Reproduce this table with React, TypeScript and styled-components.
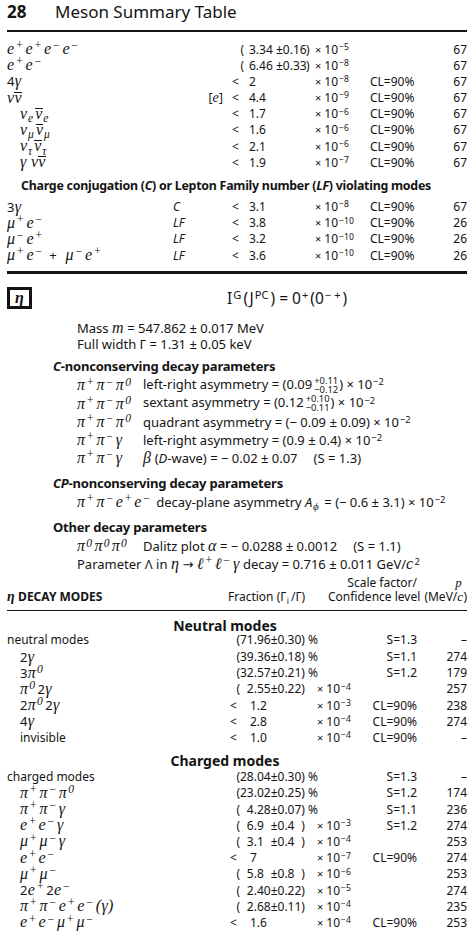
import React from "react";
import styled, { createGlobalStyle } from "styled-components";

const SANS = `"Noto Sans", "Open Sans", "DejaVu Sans", sans-serif`;
const SERIF = `"Liberation Serif", "Times New Roman", serif`;
const INK = "#141414";

const GlobalStyle = createGlobalStyle`
  html, body { margin: 0; padding: 0; background: #ffffff; }
  body { font-family: ${SANS}; color: ${INK}; }
  * { box-sizing: border-box; }
`;

const Page = styled.main`
  width: 474px;
  padding: 0 7px;
  font-size: 12px;
  line-height: 16px;
`;

const Header = styled.header`
  display: flex;
  align-items: center;
  height: 30px;
  padding-bottom: 6px;
  font-size: 17px;
`;

const PageNumber = styled.span`
  width: 48px;
  font-weight: 700;
`;

const Title = styled.h1`
  margin: 0;
  font-size: 17px;
  font-weight: 400;
`;

const Rule = styled.hr<{ $weight: number; $gap?: number }>`
  border: 0;
  margin: ${(p) => p.$gap ?? 0}px 0 0;
  height: ${(p) => p.$weight}px;
  background: ${INK};
`;

/* ---------- math helpers ---------- */
const M = styled.span<{ $size?: number }>`
  font-family: ${SERIF};
  font-style: italic;
  font-size: ${(p) => p.$size ?? 16}px;
  letter-spacing: 0.3px;
`;

const Sup = styled.sup`
  font-size: 0.72em;
  line-height: 0;
  vertical-align: 0.42em;
  margin: 0 2px 0 1px;
`;

const Sub = styled.sub`
  font-size: 0.72em;
  line-height: 0;
  vertical-align: -0.3em;
  margin: 0 2px 0 0.5px;
`;

const Bar = styled.span`
  display: inline-block;
  border-top: 1px solid currentColor;
  line-height: 0.5em;
  padding-top: 1px;
`;

const Stack = styled.span`
  display: inline-flex;
  flex-direction: column;
  vertical-align: middle;
  font-size: 0.72em;
  line-height: 0.95;
  margin: 0 1px 0 2px;
`;

const Up = styled.span`
  font-family: ${SANS};
  font-style: normal;
  font-size: 13px;
`;

/* ---------- top table ---------- */
const TopTable = styled.section`
  margin-top: 9px;
`;

const TopRow = styled.div`
  display: grid;
  grid-template-columns: 166px 32px 25px 19px 27px 30px 8px 52px 1fr 46px;
  align-items: center;
  height: 16.2px;
  white-space: nowrap;
`;

const Label = styled.div<{ $indent?: boolean }>`
  padding-left: ${(p) => (p.$indent ? 13 : 0)}px;
`;

const Flag = styled.div`
  font-style: italic;
`;

const Note = styled.div`
  text-align: right;
  padding-right: 7px;
`;

const Lead = styled.div<{ $paren?: boolean; $padR: number }>`
  text-align: ${(p) => (p.$paren ? "right" : "left")};
  padding: 0 ${(p) => (p.$paren ? p.$padR : 0)}px 0 ${(p) => (p.$paren ? 0 : 2)}px;
`;

const Num = styled.div``;
const Err = styled.div``;
const Close = styled.div``;

const Exp = styled.div`
  padding-left: 1px;
`;

const Times = styled.span`
  font-size: 11px;
  margin-right: 3px;
`;

const Conf = styled.div`
  padding-left: 4px;
`;

const Mom = styled.div`
  text-align: right;
`;

const TopHeading = styled.h2`
  margin: 0;
  height: 28px;
  padding: 2px 22px 0 0;
  line-height: 26px;
  font-size: 12.4px;
  font-weight: 700;
  letter-spacing: -0.25px;
  text-align: center;
  white-space: nowrap;
`;

/* ---------- eta header ---------- */
const EtaRow = styled.div`
  display: flex;
  align-items: center;
  margin-top: 12.5px;
`;

const EtaBox = styled.div`
  width: 25px;
  height: 22px;
  border: 3px solid ${INK};
  display: flex;
  align-items: center;
  justify-content: center;
  font-family: ${SERIF};
  font-style: italic;
  font-weight: 700;
  font-size: 16px;
`;

const Quantum = styled.div`
  margin-left: 195px;
  font-size: 15.5px;
`;

/* ---------- parameters ---------- */
const Params = styled.section`
  padding-left: 46px;
  font-size: 13px;
  white-space: nowrap;
`;

const Basic = styled.div<{ $first?: boolean }>`
  padding-left: 24px;
  height: 17px;
  line-height: 17px;
  margin-top: ${(p) => (p.$first ? 10 : 0)}px;
`;

const ParamHeading = styled.h3<{ $gap: number }>`
  margin: ${(p) => p.$gap}px 0 0;
  height: 20px;
  line-height: 20px;
  font-size: 13px;
  font-weight: 700;
  letter-spacing: -0.2px;
`;

const ParamRow = styled.div<{ $h?: number }>`
  display: grid;
  grid-template-columns: 66px 1fr;
  align-items: center;
  height: ${(p) => p.$h ?? 18.2}px;
  padding-left: 24px;
`;

const ParamLine = styled.div<{ $h?: number }>`
  display: flex;
  align-items: center;
  height: ${(p) => p.$h ?? 18.2}px;
  padding-left: 24px;
`;

const Gap = styled.span<{ $w: number }>`
  display: inline-block;
  width: ${(p) => p.$w}px;
`;

/* ---------- decay modes ---------- */
const DecayHead = styled.div`
  display: grid;
  grid-template-columns: 221px 100px 89px 50px;
  align-items: end;
  margin-top: 4px;
  line-height: 14px;
  white-space: nowrap;
`;

const HeadTitle = styled.div`
  font-weight: 700;
`;

const HeadRight = styled.div`
  text-align: right;
`;

const MomHead = styled.span`
  display: inline-block;
  padding-right: 5px;
`;

const DecayHeading = styled.h2<{ $h: number; $gap: number }>`
  margin: ${(p) => p.$gap}px 0 0;
  height: ${(p) => p.$h}px;
  line-height: ${(p) => p.$h}px;
  padding-right: 24px;
  font-size: 14px;
  font-weight: 700;
  text-align: center;
`;

const DecayRow = styled.div`
  display: grid;
  grid-template-columns: 221px 12px 75px 52px 50px 50px;
  align-items: center;
  height: 16.2px;
  white-space: nowrap;
`;

const Body = styled.div<{ $lt?: boolean }>`
  padding-left: ${(p) => (p.$lt ? 10 : 0)}px;
`;

const DExp = styled.div`
  padding-left: 2px;
`;

const Scale = styled.div`
  text-align: right;
`;

/* ---------- data ---------- */
type TopData = {
  label: React.ReactNode;
  indent?: boolean;
  flag?: string;
  note?: boolean;
  lt?: boolean;
  val: string;
  err?: string;
  exp: string;
  cl?: boolean;
  p: string;
};

const nuBar = <Bar>ν</Bar>;

const topRows: TopData[] = [
  {
    label: (
      <M>
        e<Sup>+</Sup>e<Sup>+</Sup>e<Sup>−</Sup>e<Sup>−</Sup>
      </M>
    ),
    val: "3.34",
    err: "±0.16",
    exp: "−5",
    p: "67",
  },
  {
    label: (
      <M>
        e<Sup>+</Sup>e<Sup>−</Sup>
      </M>
    ),
    val: "6.46",
    err: "±0.33",
    exp: "−8",
    p: "67",
  },
  {
    label: (
      <M>
        <Up>4</Up>γ
      </M>
    ),
    lt: true,
    val: "2",
    exp: "−8",
    cl: true,
    p: "67",
  },
  {
    label: <M>ν{nuBar}</M>,
    note: true,
    lt: true,
    val: "4.4",
    exp: "−9",
    cl: true,
    p: "67",
  },
  {
    label: (
      <M>
        ν<Sub>e</Sub>
        {nuBar}
        <Sub>e</Sub>
      </M>
    ),
    indent: true,
    lt: true,
    val: "1.7",
    exp: "−6",
    cl: true,
    p: "67",
  },
  {
    label: (
      <M>
        ν<Sub>μ</Sub>
        {nuBar}
        <Sub>μ</Sub>
      </M>
    ),
    indent: true,
    lt: true,
    val: "1.6",
    exp: "−6",
    cl: true,
    p: "67",
  },
  {
    label: (
      <M>
        ν<Sub>τ</Sub>
        {nuBar}
        <Sub>τ</Sub>
      </M>
    ),
    indent: true,
    lt: true,
    val: "2.1",
    exp: "−6",
    cl: true,
    p: "67",
  },
  {
    label: <M>γ ν{nuBar}</M>,
    indent: true,
    lt: true,
    val: "1.9",
    exp: "−7",
    cl: true,
    p: "67",
  },
];

const violRows: TopData[] = [
  {
    label: (
      <M>
        <Up>3</Up>γ
      </M>
    ),
    flag: "C",
    lt: true,
    val: "3.1",
    exp: "−8",
    cl: true,
    p: "67",
  },
  {
    label: (
      <M>
        μ<Sup>+</Sup>e<Sup>−</Sup>
      </M>
    ),
    flag: "LF",
    lt: true,
    val: "3.8",
    exp: "−10",
    cl: true,
    p: "26",
  },
  {
    label: (
      <M>
        μ<Sup>−</Sup>e<Sup>+</Sup>
      </M>
    ),
    flag: "LF",
    lt: true,
    val: "3.2",
    exp: "−10",
    cl: true,
    p: "26",
  },
  {
    label: (
      <M>
        μ<Sup>+</Sup>e<Sup>−</Sup> <Up>+</Up>&nbsp; μ<Sup>−</Sup>e<Sup>+</Sup>
      </M>
    ),
    flag: "LF",
    lt: true,
    val: "3.6",
    exp: "−10",
    cl: true,
    p: "26",
  },
];

type DecayData = {
  label: React.ReactNode;
  indent?: boolean;
  lt?: boolean;
  body: string;
  pct?: boolean;
  exp?: string;
  sc?: string;
  p: string;
};

const FS = "\u2007";

const neutral: DecayData[] = [
  { label: "neutral modes", body: "71.96±0.30)", pct: true, sc: "S=1.3", p: "–" },
  {
    label: (
      <M>
        <Up>2</Up>γ
      </M>
    ),
    indent: true,
    body: "39.36±0.18)",
    pct: true,
    sc: "S=1.1",
    p: "274",
  },
  {
    label: (
      <M>
        <Up>3</Up>π<Sup>0</Sup>
      </M>
    ),
    indent: true,
    body: "32.57±0.21)",
    pct: true,
    sc: "S=1.2",
    p: "179",
  },
  {
    label: (
      <M>
        π<Sup>0</Sup>
        <Up>2</Up>γ
      </M>
    ),
    indent: true,
    body: `${FS}2.55±0.22)`,
    exp: "−4",
    p: "257",
  },
  {
    label: (
      <M>
        <Up>2</Up>π<Sup>0</Sup>
        <Up>2</Up>γ
      </M>
    ),
    indent: true,
    lt: true,
    body: "1.2",
    exp: "−3",
    sc: "CL=90%",
    p: "238",
  },
  {
    label: (
      <M>
        <Up>4</Up>γ
      </M>
    ),
    indent: true,
    lt: true,
    body: "2.8",
    exp: "−4",
    sc: "CL=90%",
    p: "274",
  },
  { label: "invisible", indent: true, lt: true, body: "1.0", exp: "−4", sc: "CL=90%", p: "–" },
];

const charged: DecayData[] = [
  { label: "charged modes", body: "28.04±0.30)", pct: true, sc: "S=1.3", p: "–" },
  {
    label: (
      <M>
        π<Sup>+</Sup>π<Sup>−</Sup>π<Sup>0</Sup>
      </M>
    ),
    indent: true,
    body: "23.02±0.25)",
    pct: true,
    sc: "S=1.2",
    p: "174",
  },
  {
    label: (
      <M>
        π<Sup>+</Sup>π<Sup>−</Sup>γ
      </M>
    ),
    indent: true,
    body: `${FS}4.28±0.07)`,
    pct: true,
    sc: "S=1.1",
    p: "236",
  },
  {
    label: (
      <M>
        e<Sup>+</Sup>e<Sup>−</Sup>γ
      </M>
    ),
    indent: true,
    body: `${FS}6.9${FS}±0.4${FS})`,
    exp: "−3",
    sc: "S=1.2",
    p: "274",
  },
  {
    label: (
      <M>
        μ<Sup>+</Sup>μ<Sup>−</Sup>γ
      </M>
    ),
    indent: true,
    body: `${FS}3.1${FS}±0.4${FS})`,
    exp: "−4",
    p: "253",
  },
  {
    label: (
      <M>
        e<Sup>+</Sup>e<Sup>−</Sup>
      </M>
    ),
    indent: true,
    lt: true,
    body: "7",
    exp: "−7",
    sc: "CL=90%",
    p: "274",
  },
  {
    label: (
      <M>
        μ<Sup>+</Sup>μ<Sup>−</Sup>
      </M>
    ),
    indent: true,
    body: `${FS}5.8${FS}±0.8${FS})`,
    exp: "−6",
    p: "253",
  },
  {
    label: (
      <M>
        <Up>2</Up>e<Sup>+</Sup>
        <Up>2</Up>e<Sup>−</Sup>
      </M>
    ),
    indent: true,
    body: `${FS}2.40±0.22)`,
    exp: "−5",
    p: "274",
  },
  {
    label: (
      <M>
        π<Sup>+</Sup>π<Sup>−</Sup>e<Sup>+</Sup>e<Sup>−</Sup>(γ)
      </M>
    ),
    indent: true,
    body: `${FS}2.68±0.11)`,
    exp: "−4",
    p: "235",
  },
  {
    label: (
      <M>
        e<Sup>+</Sup>e<Sup>−</Sup>μ<Sup>+</Sup>μ<Sup>−</Sup>
      </M>
    ),
    indent: true,
    lt: true,
    body: "1.6",
    exp: "−4",
    sc: "CL=90%",
    p: "253",
  },
];

const TopLine = ({ r }: { r: TopData }) => (
  <TopRow>
    <Label $indent={r.indent}>{r.label}</Label>
    <Flag>{r.flag}</Flag>
    <Note>
      {r.note && (
        <>
          [<M $size={14}>e</M>]
        </>
      )}
    </Note>
    <Lead $paren={!r.lt} $padR={5}>
      {r.lt ? "<" : "("}
    </Lead>
    <Num>{r.val}</Num>
    <Err>{r.err}</Err>
    <Close>{r.err ? ")" : ""}</Close>
    <Exp>
      <Times>×</Times>10<Sup>{r.exp}</Sup>
    </Exp>
    <Conf>{r.cl ? "CL=90%" : ""}</Conf>
    <Mom>{r.p}</Mom>
  </TopRow>
);

const DecayLine = ({ r }: { r: DecayData }) => (
  <DecayRow>
    <Label $indent={r.indent}>{r.label}</Label>
    <Lead $paren={!r.lt} $padR={0}>
      {r.lt ? "<" : "("}
    </Lead>
    <Body $lt={r.lt}>
      {r.body}
      {r.pct ? " %" : ""}
    </Body>
    <DExp>
      {r.exp && (
        <>
          <Times>×</Times>10<Sup>{r.exp}</Sup>
        </>
      )}
    </DExp>
    <Scale>{r.sc}</Scale>
    <Mom>{r.p}</Mom>
  </DecayRow>
);

const pipi0 = (
  <M>
    π<Sup>+</Sup>π<Sup>−</Sup>π<Sup>0</Sup>
  </M>
);
const pipig = (
  <M>
    π<Sup>+</Sup>π<Sup>−</Sup>γ
  </M>
);

export default function App() {
  return (
    <>
      <GlobalStyle />
      <Page>
        <Header>
          <PageNumber>28</PageNumber>
          <Title>Meson Summary Table</Title>
        </Header>
        <Rule $weight={2} />

        <TopTable>
          {topRows.map((r, i) => (
            <TopLine key={i} r={r} />
          ))}
          <TopHeading>
            Charge conjugation (<i>C</i>) or Lepton Family number (<i>LF</i>) violating modes
          </TopHeading>
          {violRows.map((r, i) => (
            <TopLine key={i} r={r} />
          ))}
        </TopTable>
        <Rule $weight={3} $gap={8} />

        <EtaRow>
          <EtaBox>η</EtaBox>
          <Quantum>
            I<Sup>G</Sup>(J<Sup>PC</Sup>) = 0<Sup>+</Sup>(0<Sup>− +</Sup>)
          </Quantum>
        </EtaRow>

        <Params>
          <Basic $first>
            Mass <M>m</M> = 547.862 ± 0.017 MeV
          </Basic>
          <Basic>Full width Γ = 1.31 ± 0.05 keV</Basic>

          <ParamHeading $gap={3.5}>
            <i>C</i>-nonconserving decay parameters
          </ParamHeading>
          <ParamRow>
            {pipi0}
            <span>
              left-right asymmetry = (0.09
              <Stack>
                <span>+0.11</span>
                <span>−0.12</span>
              </Stack>
              ) × 10<Sup>−2</Sup>
            </span>
          </ParamRow>
          <ParamRow>
            {pipi0}
            <span>
              sextant asymmetry = (0.12
              <Stack>
                <span>+0.10</span>
                <span>−0.11</span>
              </Stack>
              ) × 10<Sup>−2</Sup>
            </span>
          </ParamRow>
          <ParamRow>
            {pipi0}
            <span>
              quadrant asymmetry = (− 0.09 ± 0.09) × 10<Sup>−2</Sup>
            </span>
          </ParamRow>
          <ParamRow>
            {pipig}
            <span>
              left-right asymmetry = (0.9 ± 0.4) × 10<Sup>−2</Sup>
            </span>
          </ParamRow>
          <ParamRow>
            {pipig}
            <span>
              <M>β</M> (<i>D</i>-wave) = − 0.02 ± 0.07
              <Gap $w={16} />
              (S = 1.3)
            </span>
          </ParamRow>

          <ParamHeading $gap={6}>
            <i>CP</i>-nonconserving decay parameters
          </ParamHeading>
          <ParamLine>
            <span>
              <M>
                π<Sup>+</Sup>π<Sup>−</Sup>e<Sup>+</Sup>e<Sup>−</Sup>
              </M>{" "}
              decay-plane asymmetry <i>A</i>
              <Sub>
                <M $size={11}>ϕ</M>
              </Sub>{" "}
              = (− 0.6 ± 3.1) × 10<Sup>−2</Sup>
            </span>
          </ParamLine>

          <ParamHeading $gap={6}>Other decay parameters</ParamHeading>
          <ParamRow $h={18}>
            <M>
              π<Sup>0</Sup>π<Sup>0</Sup>π<Sup>0</Sup>
            </M>
            <span>
              Dalitz plot <M>α</M> = − 0.0288 ± 0.0012
              <Gap $w={16} />
              (S = 1.1)
            </span>
          </ParamRow>
          <ParamLine $h={17}>
            <span>
              Parameter Λ in <M>η</M> → <M>ℓ<Sup>+</Sup>ℓ<Sup>−</Sup>γ</M> decay = 0.716 ± 0.011 GeV/
              <M>c</M>
              <Sup>2</Sup>
            </span>
          </ParamLine>
        </Params>

        <DecayHead>
          <HeadTitle>
            <M $size={14}>η</M> DECAY MODES
          </HeadTitle>
          <div>
            Fraction (Γ<Sub>i</Sub>/Γ)
          </div>
          <HeadRight>
            Scale factor/
            <br />
            Confidence level
          </HeadRight>
          <HeadRight>
            <MomHead>
              <M $size={13}>p</M>
            </MomHead>
            <br />
            (MeV/<M $size={13}>c</M>)
          </HeadRight>
        </DecayHead>
        <Rule $weight={1} $gap={5.5} />

        <DecayHeading $h={13} $gap={8.5}>
          Neutral modes
        </DecayHeading>
        {neutral.map((r, i) => (
          <DecayLine key={i} r={r} />
        ))}

        <DecayHeading $h={16} $gap={7}>
          Charged modes
        </DecayHeading>
        {charged.map((r, i) => (
          <DecayLine key={i} r={r} />
        ))}
      </Page>
    </>
  );
}
